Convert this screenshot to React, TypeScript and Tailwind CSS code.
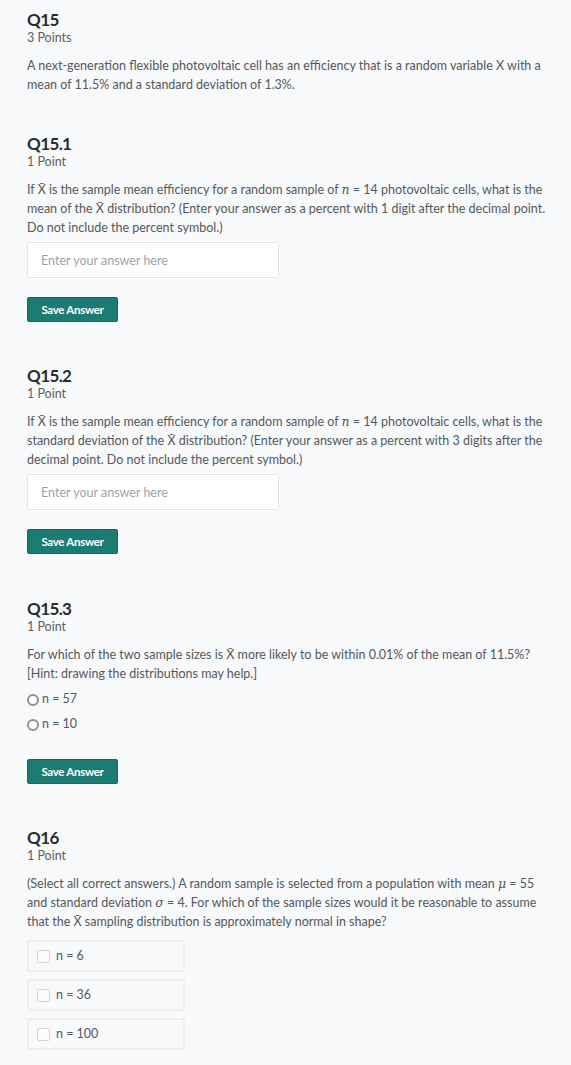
import React from "react";

const Xbar = () => <span className="leading-[0]">X̄</span>;

const MathVar = ({ children }: { children: React.ReactNode }) => (
  <span
    className="italic leading-[0]"
    style={{ fontFamily: '"DejaVu Serif", "Liberation Serif", serif' }}
  >
    {children}
  </span>
);

function Heading({ title, points }: { title: string; points: string }) {
  return (
    <div>
      <h2 className="text-[17px] leading-[21px] font-bold tracking-[-0.6px] text-[#262d31]">{title}</h2>
      <p className="text-[12.5px] leading-[16px] text-[#5a5f63]">{points}</p>
    </div>
  );
}

function AnswerInput() {
  return (
    <input
      type="text"
      placeholder="Enter your answer here"
      className="block w-[252px] h-[36px] mt-[5px] px-[13px] bg-white border border-[#e1e4e9] rounded-[2px] text-[12.5px] text-[#4f5357] placeholder:text-[#9da3a8] focus:outline-none"
    />
  );
}

function SaveButton({ className }: { className?: string }) {
  return (
    <button
      type="button"
      className={
        "block w-[91px] h-[25px] bg-[#1c7b73] border border-[#17665f] rounded-[2px] text-white text-[11.5px] font-bold tracking-[-0.3px] " +
        (className ?? "")
      }
    >
      Save Answer
    </button>
  );
}

export default function App() {
  return (
    <div
      className="min-h-[1065px] bg-[#f8f9fb] pl-[27px] pr-[10px] pt-[9px] text-[#53585c]"
      style={{ fontFamily: 'Lato, "Liberation Sans", sans-serif' }}
    >
      {/* Q15 */}
      <section>
        <Heading title="Q15" points="3 Points" />
        <p className="mt-[10px] text-[12.5px] leading-[19px]">
          A next-generation flexible photovoltaic cell has an efficiency that is a random variable X with a
          <br />
          mean of 11.5% and a standard deviation of 1.3%.
        </p>
      </section>

      {/* Q15.1 */}
      <section className="mt-[39px]">
        <Heading title="Q15.1" points="1 Point" />
        <p className="mt-[10px] text-[12.5px] leading-[19px]">
          If <Xbar /> is the sample mean efficiency for a random sample of <MathVar>n</MathVar> = 14 photovoltaic cells, what is the
          <br />
          mean of the <Xbar /> distribution? (Enter your answer as a percent with 1 digit after the decimal point.
          <br />
          Do not include the percent symbol.)
        </p>
        <AnswerInput />
        <SaveButton className="mt-[19px]" />
      </section>

      {/* Q15.2 */}
      <section className="mt-[43px]">
        <Heading title="Q15.2" points="1 Point" />
        <p className="mt-[10px] text-[12.5px] leading-[19px]">
          If <Xbar /> is the sample mean efficiency for a random sample of <MathVar>n</MathVar> = 14 photovoltaic cells, what is the
          <br />
          standard deviation of the <Xbar /> distribution? (Enter your answer as a percent with 3 digits after the
          <br />
          decimal point. Do not include the percent symbol.)
        </p>
        <AnswerInput />
        <SaveButton className="mt-[19px]" />
      </section>

      {/* Q15.3 */}
      <section className="mt-[44px]">
        <Heading title="Q15.3" points="1 Point" />
        <p className="mt-[10px] text-[12.5px] leading-[19px]">
          For which of the two sample sizes is <Xbar /> more likely to be within 0.01% of the mean of 11.5%?
          <br />
          [Hint: drawing the distributions may help.]
        </p>
        <div className="mt-[7px] flex flex-col gap-[6px]">
          {["n = 57", "n = 10"].map((opt) => (
            <label key={opt} className="flex items-center gap-[3px] h-[19px] text-[12.5px]">
              <span className="w-[12px] h-[12px] rounded-full border-2 border-[#8c9195] bg-white" />
              <span>{opt}</span>
            </label>
          ))}
        </div>
        <SaveButton className="mt-[25px]" />
      </section>

      {/* Q16 */}
      <section className="mt-[43px]">
        <Heading title="Q16" points="1 Point" />
        <p className="mt-[10px] text-[12.5px] leading-[19px]">
          (Select all correct answers.) A random sample is selected from a population with mean <MathVar>μ</MathVar> = 55
          <br />
          and standard deviation <MathVar>σ</MathVar> = 4. For which of the sample sizes would it be reasonable to assume
          <br />
          that the <Xbar /> sampling distribution is approximately normal in shape?
        </p>
        <div className="mt-[9px] flex flex-col gap-[7px] pb-[13px]">
          {["n = 6", "n = 36", "n = 100"].map((opt) => (
            <label
              key={opt}
              className="flex items-center gap-[6px] w-[158px] h-[32px] px-[8px] border-2 border-[#eceef1] rounded-[2px] text-[12.5px]"
            >
              <span className="w-[13px] h-[13px] border border-[#d3d6da] rounded-[2px] bg-[#fbfbfc]" />
              <span>{opt}</span>
            </label>
          ))}
        </div>
      </section>
    </div>
  );
}
